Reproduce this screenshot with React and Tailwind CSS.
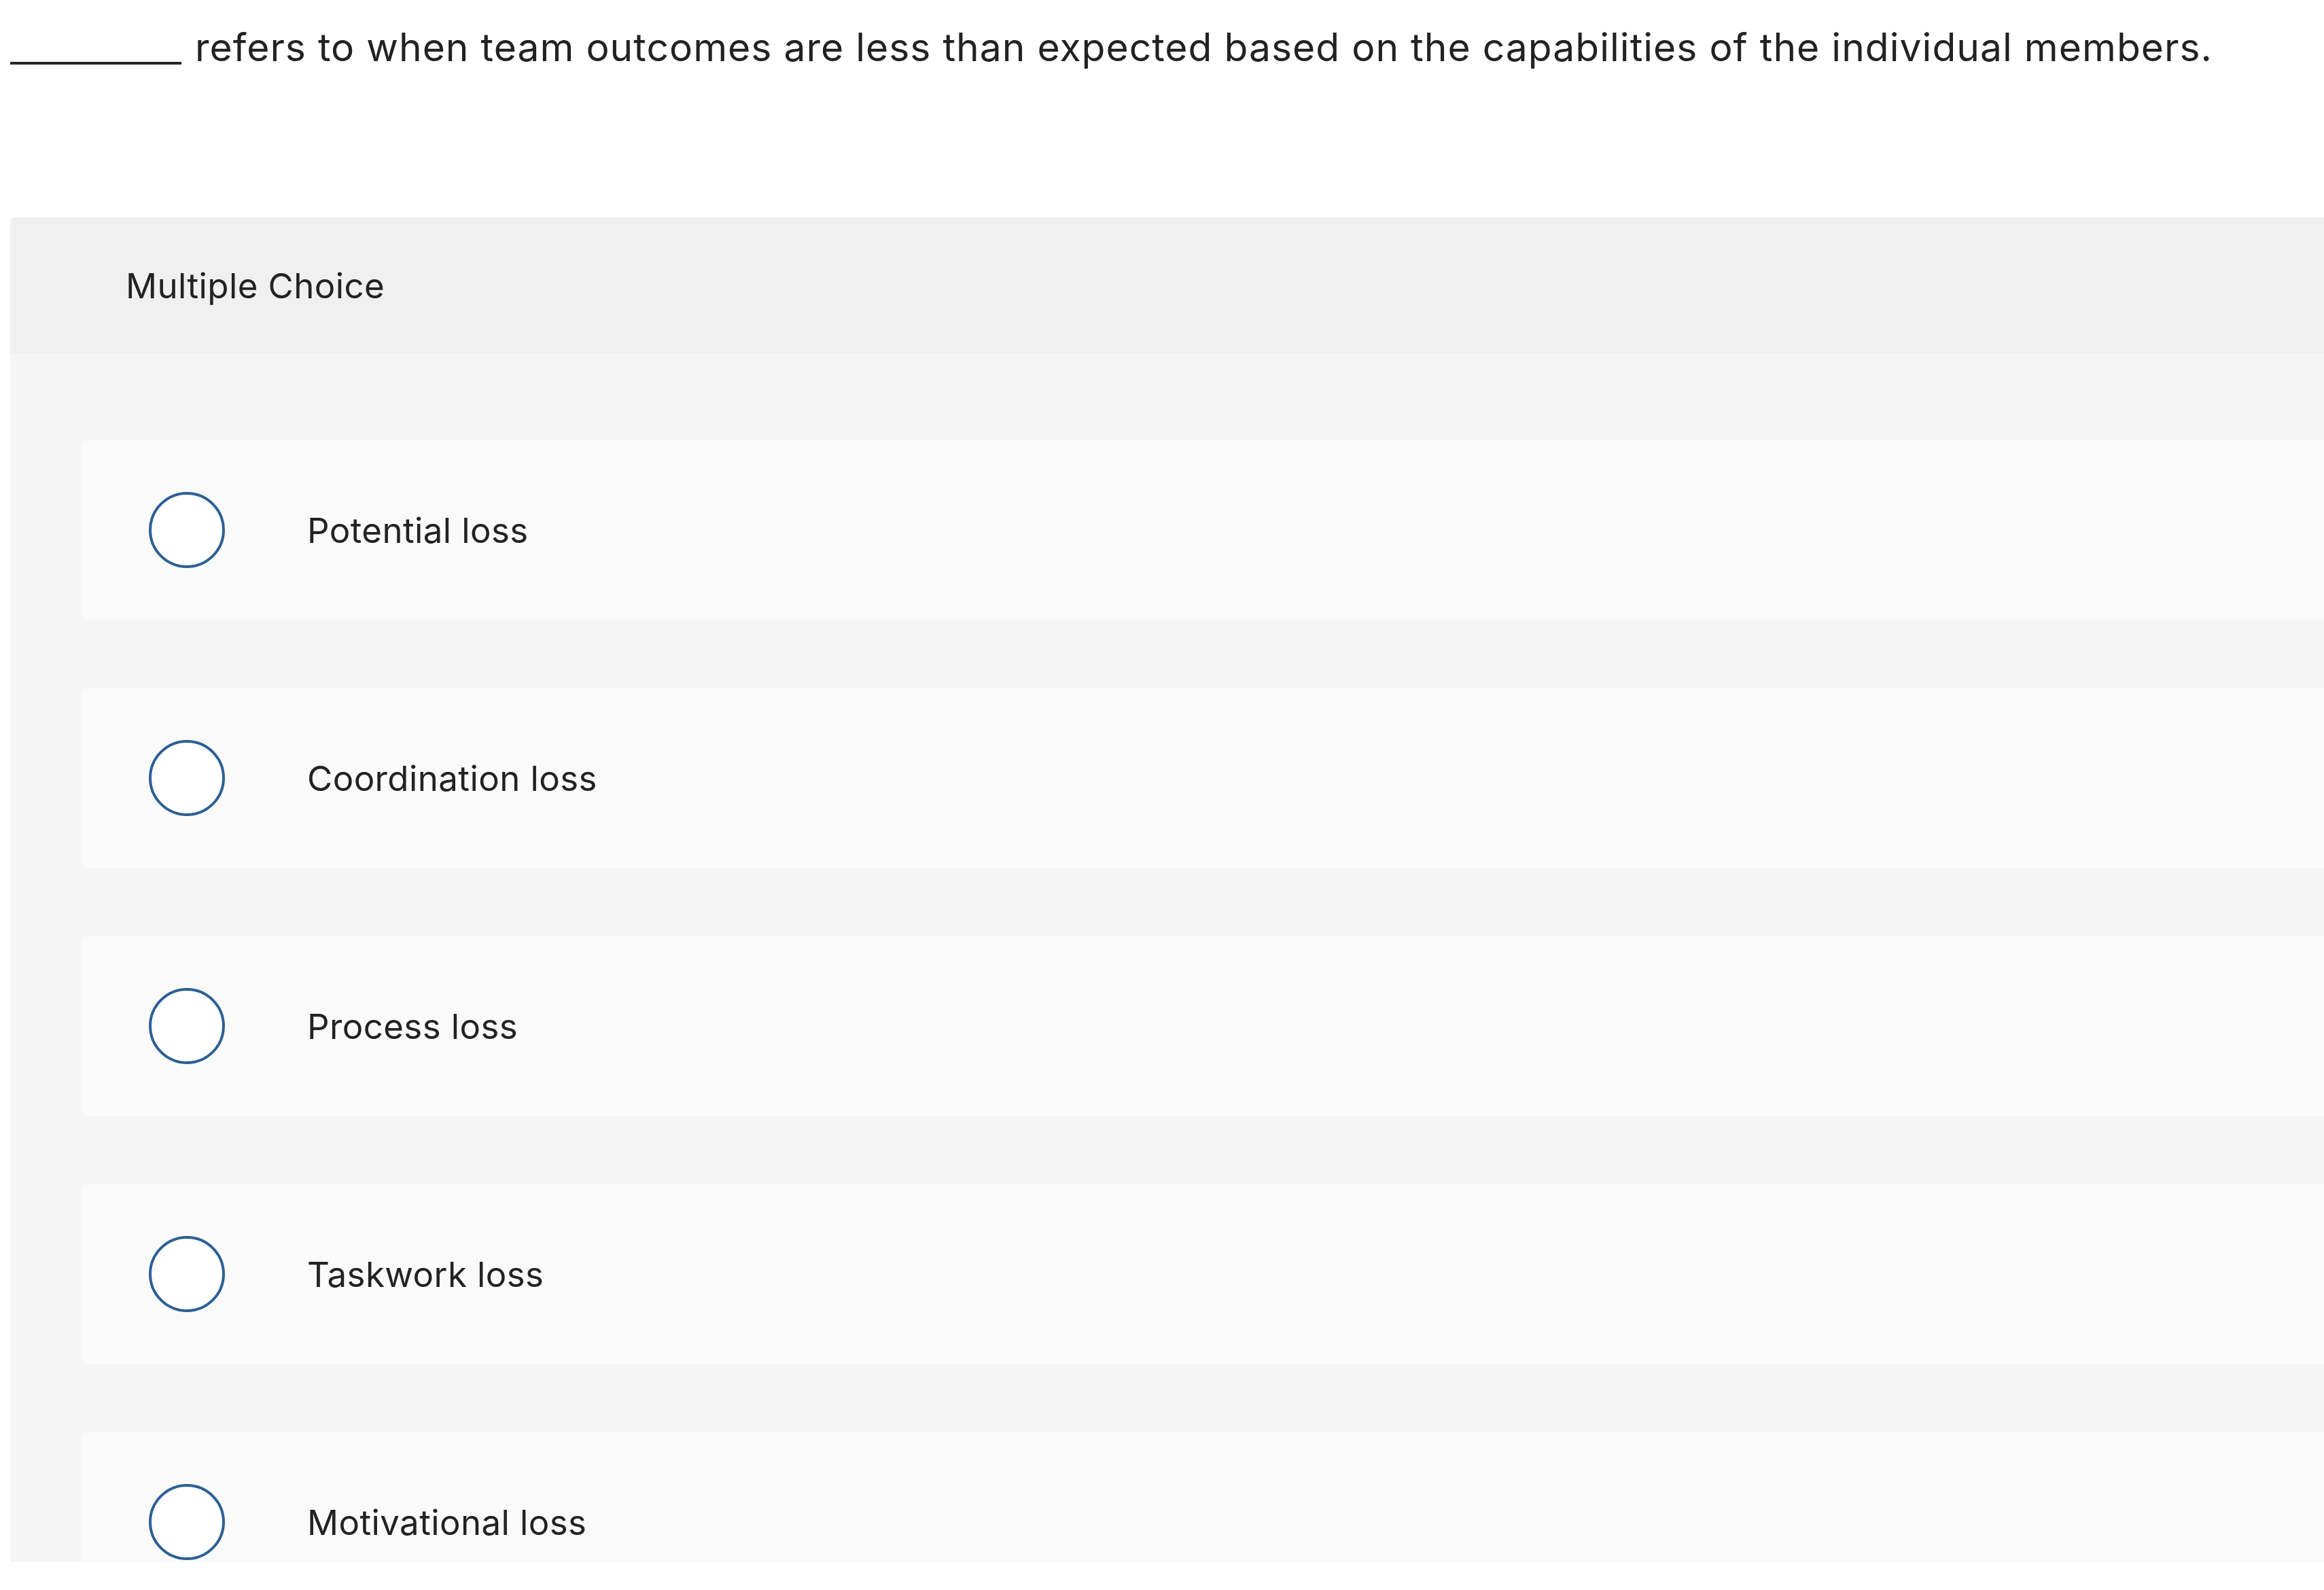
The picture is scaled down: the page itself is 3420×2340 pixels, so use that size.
import React from "react";

const options = [
  "Potential loss",
  "Coordination loss",
  "Process loss",
  "Taskwork loss",
  "Motivational loss",
];

export default function App() {
  return (
    <div
      className="w-full h-[2340px] overflow-hidden bg-white text-[#222222]"
      style={{ fontFamily: "Inter, 'Open Sans', Arial, sans-serif" }}
    >
      <p className="pl-[15px] pt-[37px] text-[57px] leading-[66px] tracking-[1px] whitespace-nowrap">
        <span className="inline-block w-[252px] h-[4px] bg-[#262626] align-[-5px] mr-[20px]"></span>
        refers to when team outcomes are less than expected based on the capabilities of the individual members.
      </p>

      <div className="ml-[15px] mt-[217px] h-[1979px] overflow-hidden rounded-tl-[6px]">
        <div className="h-[200px] bg-[#f0f0f0] flex items-center pl-[170px]">
          <span className="text-[51px] leading-none tracking-[0.4px]">Multiple Choice</span>
        </div>
        <div className="bg-[#f5f5f5] pt-[128px] pl-[104px] flex flex-col gap-[101px] pb-[200px]">
          {options.map((o) => (
            <div
              key={o}
              className="h-[264px] shrink-0 rounded-l-[8px] bg-[#fafafa] flex items-center pl-[100px]"
            >
              <div className="w-[112px] h-[112px] rounded-full border-[4px] border-[#2c5f94] bg-white shrink-0"></div>
              <span className="ml-[121px] text-[51px] leading-none tracking-[0.4px]">{o}</span>
            </div>
          ))}
        </div>
      </div>
    </div>
  );
}
